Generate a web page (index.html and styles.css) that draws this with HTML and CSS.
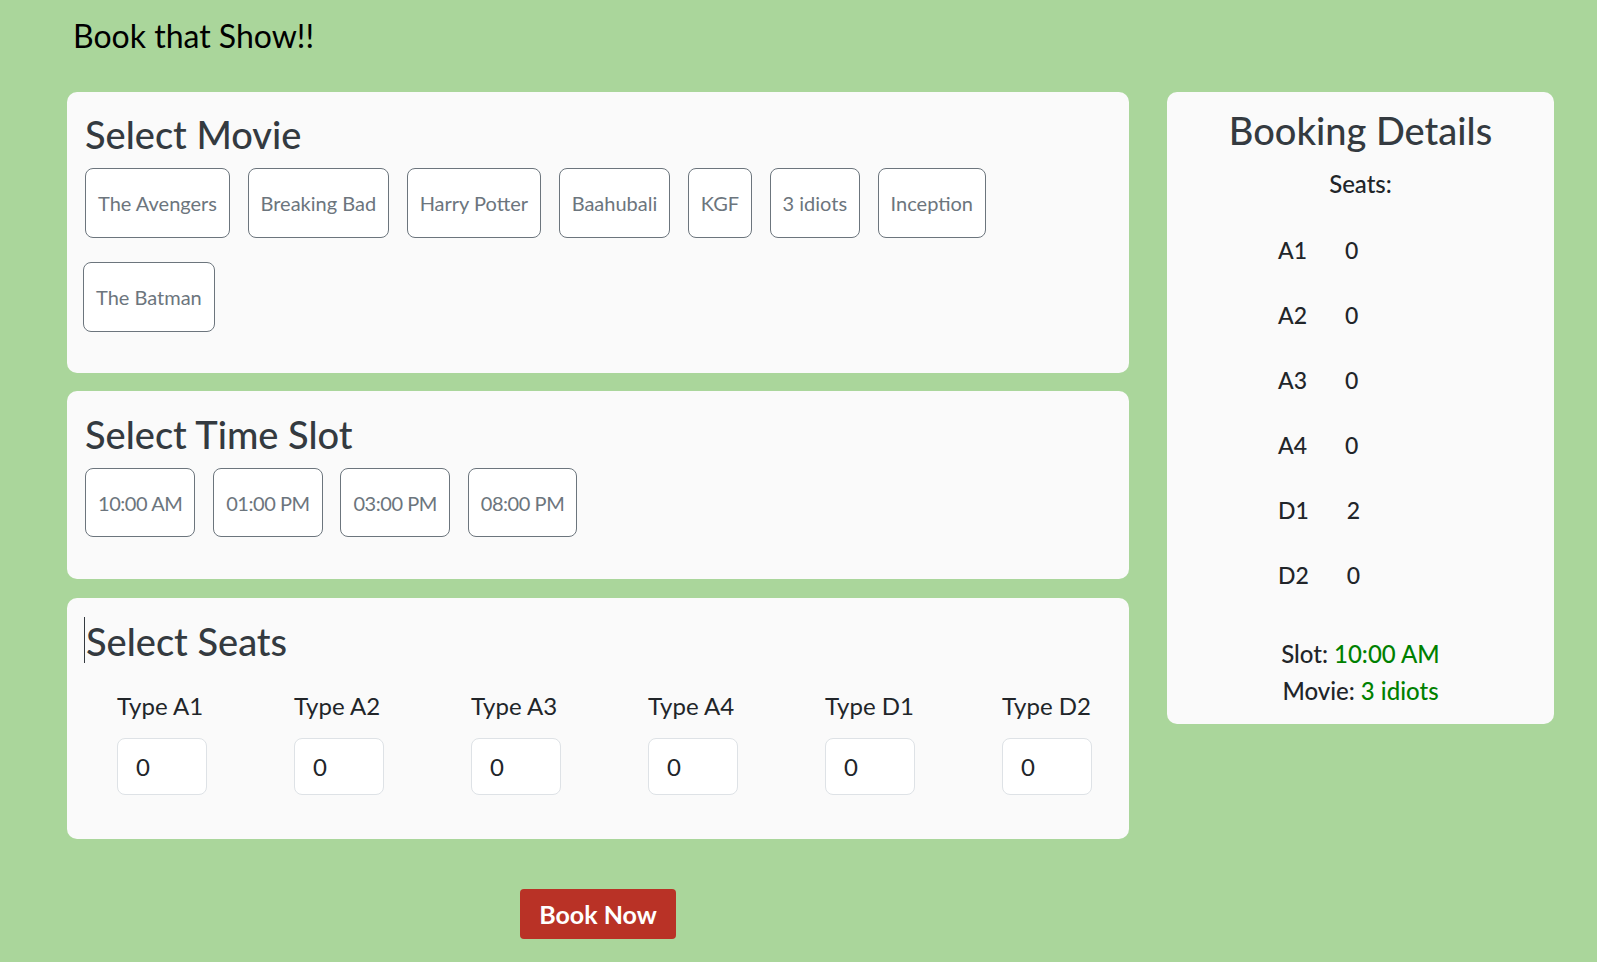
FILE: index.html
```html
<!DOCTYPE html>
<html lang="en">
<head>
<meta charset="utf-8">
<title>Book that Show!!</title>
<link rel="stylesheet" href="styles.css">
</head>
<body>
<div class="page">
  <h2 class="brand">Book that Show!!</h2>
  <div class="layout">
    <div class="left">
      <section class="card movie-card">
        <h1 class="card-title">Select Movie</h1>
        <div class="options">
          <button class="option">The Avengers</button>
          <button class="option">Breaking Bad</button>
          <button class="option">Harry Potter</button>
          <button class="option">Baahubali</button>
          <button class="option">KGF</button>
          <button class="option">3 idiots</button>
          <button class="option">Inception</button>
          <button class="option option-wrap">The Batman</button>
        </div>
      </section>
      <section class="card slot-card">
        <h1 class="card-title">Select Time Slot</h1>
        <div class="options time-options">
          <button class="option">10:00 AM</button>
          <button class="option">01:00 PM</button>
          <button class="option">03:00 PM</button>
          <button class="option">08:00 PM</button>
        </div>
      </section>
      <section class="card seats-card">
        <h1 class="card-title"><span class="caret"></span>Select Seats</h1>
        <div class="seat-grid">
          <label class="seat-field"><span class="seat-label">Type A1</span><input class="seat-input" type="text" value="0"></label>
          <label class="seat-field"><span class="seat-label">Type A2</span><input class="seat-input" type="text" value="0"></label>
          <label class="seat-field"><span class="seat-label">Type A3</span><input class="seat-input" type="text" value="0"></label>
          <label class="seat-field"><span class="seat-label">Type A4</span><input class="seat-input" type="text" value="0"></label>
          <label class="seat-field"><span class="seat-label">Type D1</span><input class="seat-input" type="text" value="0"></label>
          <label class="seat-field"><span class="seat-label">Type D2</span><input class="seat-input" type="text" value="0"></label>
        </div>
      </section>
      <div class="actions">
        <button class="book-btn">Book Now</button>
      </div>
    </div>
    <aside class="card summary">
      <h1 class="summary-title">Booking Details</h1>
      <h4 class="summary-sub">Seats:</h4>
      <ul class="seat-list">
        <li class="seat-row"><span class="seat-name">A1</span><span class="seat-count">0</span></li>
        <li class="seat-row"><span class="seat-name">A2</span><span class="seat-count">0</span></li>
        <li class="seat-row"><span class="seat-name">A3</span><span class="seat-count">0</span></li>
        <li class="seat-row"><span class="seat-name">A4</span><span class="seat-count">0</span></li>
        <li class="seat-row"><span class="seat-name">D1</span><span class="seat-count">2</span></li>
        <li class="seat-row"><span class="seat-name">D2</span><span class="seat-count">0</span></li>
      </ul>
      <div class="summary-meta">
        <p class="meta-line">Slot: <span class="meta-value">10:00 AM</span></p>
        <p class="meta-line">Movie: <span class="meta-value">3 idiots</span></p>
      </div>
    </aside>
  </div>
</div>
</body>
</html>
```
FILE: styles.css
```css
* { box-sizing: border-box; }

body {
  margin: 0;
  background: #aad69b;
  font-family: Lato, "Open Sans", "Noto Sans", sans-serif;
  color: #212529;
}

.page {
  padding: 17.4px 43px 0 67px;
}

.brand {
  margin: 0 0 35.9px 6px;
  font-size: 32px;
  font-weight: 400;
  line-height: 38.4px;
  color: #000;
}

.layout {
  display: flex;
  align-items: flex-start;
  gap: 38px;
}

.left {
  width: 1062px;
  display: flex;
  flex-direction: column;
}

.card {
  background: #fafafa;
  border-radius: 10px;
}

.movie-card,
.slot-card {
  padding: 20.5px 18px 17px;
}

.slot-card {
  margin-top: 18.2px;
}

.seats-card {
  margin-top: 19.5px;
  padding: 20.5px 18px 44.2px;
}

.card-title {
  margin: 0 0 10.5px;
  font-size: 38px;
  font-weight: 500;
  line-height: 45.6px;
  color: #343a40;
}

.seats-card .card-title {
  margin-bottom: 23.8px;
}

.caret {
  display: inline-block;
  width: 1px;
  height: 46px;
  background: #343a40;
  vertical-align: top;
  margin-top: -2px;
  margin-left: -1px;
  margin-right: 1px;
}

.options {
  display: flex;
  flex-wrap: wrap;
  column-gap: 17.5px;
}

.time-options {
  column-gap: 17.8px;
}

.option {
  margin: 0 0 24.6px;
  padding: 18.7px 12px;
  font-family: inherit;
  font-size: 20px;
  line-height: 30px;
  color: #6c757d;
  background: #fff;
  border: 1px solid #6c757d;
  border-radius: 8px;
}

.time-options .option {
  letter-spacing: -0.45px;
}

.option-wrap {
  margin-left: -2px;
}

.seat-grid {
  display: grid;
  grid-template-columns: repeat(6, 90px);
  column-gap: 87px;
  margin: 0 0 0 32px;
}

.seat-field {
  display: flex;
  flex-direction: column;
}

.seat-label {
  font-size: 24px;
  line-height: 36px;
  color: #212529;
  white-space: nowrap;
}

.seat-input {
  margin-top: 13.8px;
  width: 90px;
  height: 57px;
  padding: 0 0 0 18px;
  font-family: inherit;
  font-size: 24px;
  color: #212529;
  background: #fff;
  border: 1px solid #dee2e6;
  border-radius: 8px;
}

.actions {
  display: flex;
  justify-content: center;
  margin-top: 50px;
}

.book-btn {
  padding: 7px 19px;
  font-family: inherit;
  font-size: 25px;
  font-weight: 700;
  line-height: 36px;
  color: #fff;
  background: #b93226;
  border: none;
  border-radius: 4px;
}

.summary {
  width: 387px;
  padding: 16px 0 14.7px;
  text-align: center;
}

.summary-title {
  margin: 0;
  font-size: 38px;
  font-weight: 500;
  line-height: 45.6px;
  color: #343a40;
}

.summary-sub {
  margin: 16.3px 0 0;
  font-size: 24px;
  font-weight: 500;
  line-height: 28.8px;
  color: #212529;
}

.seat-list {
  list-style: none;
  margin: 38px 0 0;
  padding: 0 0 0 111px;
  text-align: left;
  display: flex;
  flex-direction: column;
  gap: 36.2px;
}

.seat-row {
  font-size: 23px;
  font-weight: 500;
  line-height: 28.8px;
  color: #212529;
}

.seat-name {
  margin-right: 38px;
}

.summary-meta {
  margin-top: 44.5px;
}

.meta-line {
  margin: 0;
  font-size: 24px;
  font-weight: 500;
  line-height: 37.3px;
  color: #212529;
}

.meta-value {
  color: #008000;
}
```
